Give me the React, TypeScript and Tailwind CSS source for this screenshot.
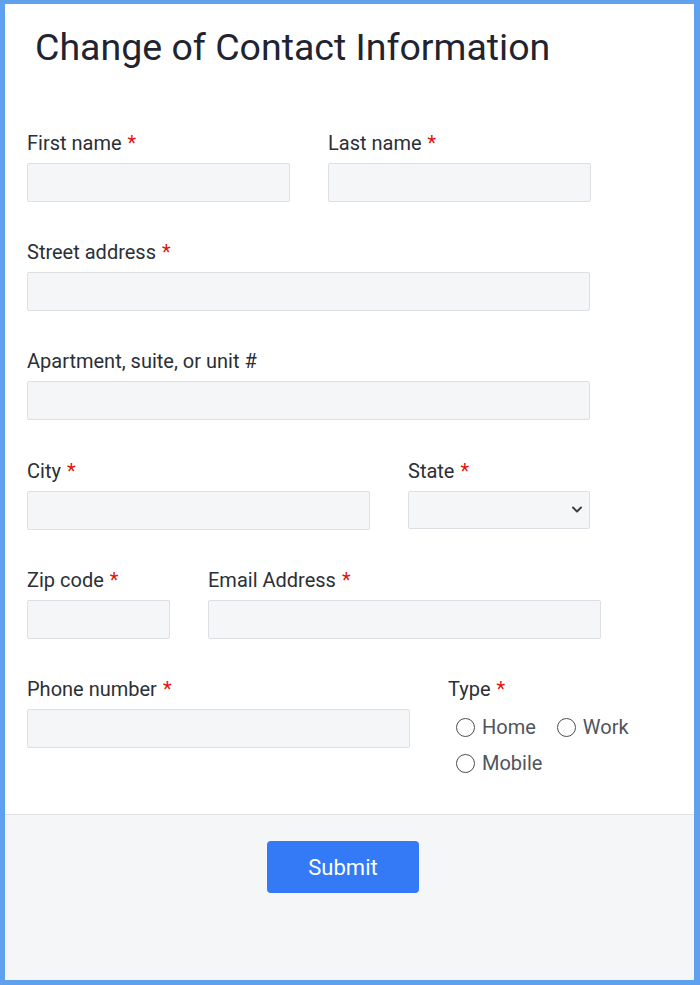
import { useState } from "react";

const font = { fontFamily: "Roboto, 'Noto Sans', Arial, sans-serif" };

function Label({ text, required = true }: { text: string; required?: boolean }) {
  return (
    <label className="block pt-[1px] text-[20px] leading-[24px] text-[#2b2f36]">
      {text}
      {required ? <span className="ml-[6px] text-[#e3120b]">*</span> : null}
    </label>
  );
}

function Field({ label, width, required = true }: { label: string; width: string; required?: boolean }) {
  return (
    <div className={width}>
      <Label text={label} required={required} />
      <input
        type="text"
        className="mt-[8px] block h-[39px] w-full rounded-[2px] border border-[#dcdfe3] bg-[#f5f6f8] px-3 text-[18px] outline-none"
      />
    </div>
  );
}

function Radio({ label, checked, onClick }: { label: string; checked: boolean; onClick: () => void }) {
  return (
    <button type="button" onClick={onClick} className="flex items-center gap-[7px] text-[20px] text-[#50545b]">
      <span className="flex h-[19px] w-[19px] items-center justify-center rounded-full border-[1.5px] border-[#4a4d52] bg-white">
        {checked ? <span className="h-[9px] w-[9px] rounded-full bg-[#3479f6]" /> : null}
      </span>
      {label}
    </button>
  );
}

export default function App() {
  const [type, setType] = useState<string | null>(null);

  return (
    <div
      style={font}
      className="flex h-[985px] w-[700px] flex-col border-b-[5px] border-l-[5px] border-r-[6px] border-t-4 border-[#5fa1ef] bg-white"
    >
      <div className="pb-[33px] pl-[22px] pt-[20px]">
        <h1 className="pl-[8px] text-[37.5px] font-normal leading-[46px] text-[#1f2430]">
          Change of Contact Information
        </h1>

        <div className="mt-[60px] flex gap-[38px]">
          <Field label="First name" width="w-[263px]" />
          <Field label="Last name" width="w-[263px]" />
        </div>

        <div className="mt-[37px]">
          <Field label="Street address" width="w-[563px]" />
        </div>

        <div className="mt-[37px]">
          <Field label="Apartment, suite, or unit #" width="w-[563px]" required={false} />
        </div>

        <div className="mt-[38px] flex gap-[38px]">
          <Field label="City" width="w-[343px]" />
          <div className="w-[182px]">
            <Label text="State" />
            <div className="relative mt-[8px]">
              <select className="block h-[38px] w-full appearance-none rounded-[2px] border border-[#dcdfe3] bg-[#f5f6f8] px-3 text-[18px] outline-none">
                <option></option>
              </select>
              <svg
                className="pointer-events-none absolute right-[7px] top-[14px]"
                width="12"
                height="9"
                viewBox="0 0 12 9"
                fill="none"
              >
                <path d="M2 2.5l4 4 4-4" stroke="#3d4047" strokeWidth="2" strokeLinecap="round" strokeLinejoin="round" />
              </svg>
            </div>
          </div>
        </div>

        <div className="mt-[37px] flex gap-[38px]">
          <Field label="Zip code" width="w-[143px]" />
          <Field label="Email Address" width="w-[393px]" />
        </div>

        <div className="mt-[37px] flex gap-[38px]">
          <Field label="Phone number" width="w-[383px]" />
          <div>
            <Label text="Type" />
            <div className="mt-[8px] pl-[8px]">
              <div className="flex h-[36px] items-center gap-[21px]">
                <Radio label="Home" checked={type === "home"} onClick={() => setType("home")} />
                <Radio label="Work" checked={type === "work"} onClick={() => setType("work")} />
              </div>
              <div className="flex h-[36px] items-center">
                <Radio label="Mobile" checked={type === "mobile"} onClick={() => setType("mobile")} />
              </div>
            </div>
          </div>
        </div>
      </div>

      <div className="flex flex-1 justify-center border-t border-[#dfe1e5] bg-[#f5f6f8] pl-[22px] pr-[35px] pt-[26px]">
        <button
          type="button"
          className="h-[52px] w-[152px] rounded-[4px] bg-[#3479f6] text-[22px] text-white"
        >
          Submit
        </button>
      </div>
    </div>
  );
}
